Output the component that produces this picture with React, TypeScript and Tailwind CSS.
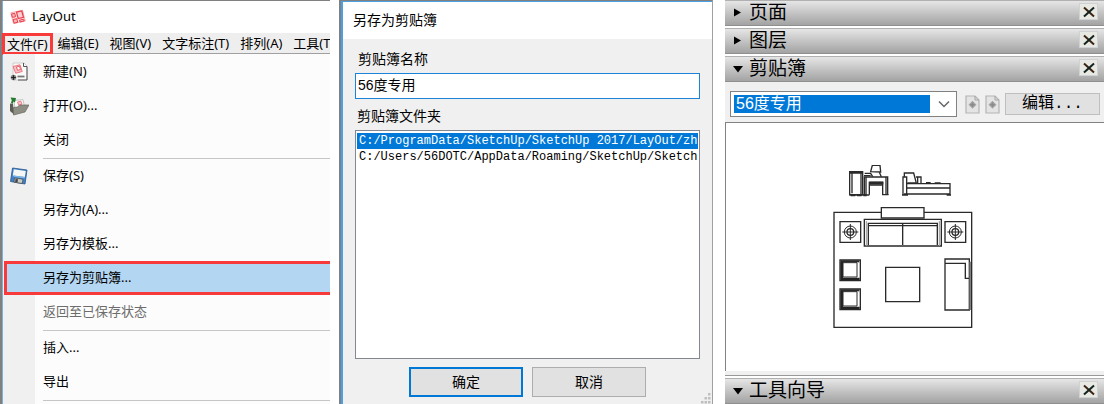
import { useState } from "react";
import type { ReactNode } from "react";
import clsx from "clsx";

const UI_FONT = "font-['Noto_Sans','Noto_Sans_CJK_SC',sans-serif]";
const DIALOG_FONT = "font-['Liberation_Sans','Noto_Sans_CJK_SC',sans-serif]";

function LayOutLogo() {
  return (
    <svg viewBox="0 0 16 16" className="size-4" aria-hidden="true">
      <path d="M.8 3.800 12.500 1.200 15.300 12 3.500 14.600Z" fill="#fde3e5" stroke="#f29aa0" strokeWidth=".8" />
      <path d="m6.500 3.200 5.300-1.200 1.700 6.300-5.300 1.200Z" fill="#fbd0d3" stroke="#e8404c" strokeWidth="1.200" />
      <path d="m1.500 5 3.200-.7.9 3.400-3.200.7Z" fill="#f8b9bd" stroke="#e8404c" strokeWidth="1" />
      <path d="m3.200 10.500 3.600-.8.9 3.600-3.600.8ZM9.500 11.200l4.200-1 .5 1.800-4.200 1Z" fill="#f8b9bd" stroke="#e8404c" strokeWidth="1" />
    </svg>
  );
}

function NewIcon() {
  return (
    <svg viewBox="0 0 20 20" className="size-5" aria-hidden="true">
      <path d="M4 1h11l3 3v14H4Z" fill="#fafafa" stroke="#c4c4c4" strokeWidth=".8" />
      <path d="M14.500 1v3.500H18V18H9" fill="none" stroke="#555" strokeWidth="1" />
      <path d="m4 4.500 7-1.700 2.200 6.700-6.500 1.700Z" fill="#f8c3c7" stroke="#ec6a73" strokeWidth=".9" />
      <path d="m7.500 5 3-.8 1 3.300-3 .8Z" fill="#fff" stroke="#e0444e" strokeWidth=".8" />
      <path d="M8.500 14.500h7" stroke="#777" strokeWidth="1.800" />
      <circle cx="4.500" cy="15.500" r="2.800" fill="#8b8b8b" />
      <path d="M4.500 13.200v4.600M2.200 15.500h4.600" stroke="#222" strokeWidth="1.200" />
    </svg>
  );
}

function OpenIcon() {
  return (
    <svg viewBox="0 0 20 20" className="size-5" aria-hidden="true">
      <path d="M1 7.500 4 8l1 10.500-4-3.500Z" fill="#5d5d56" />
      <path d="m5 4.500 9-.8 1.500 7L6 13Z" fill="#fff" stroke="#b5b5b5" strokeWidth=".8" />
      <path d="m8.500 6 3.500-.8 1 3-3.500.8Z" fill="#f9c4c7" stroke="#ec6a73" strokeWidth=".8" />
      <path d="m1.500 1.500 5.500.5-1 4.500-1.500-1L3.500 8 2 7l.8-2.800Z" fill="#257a2e" />
      <path d="m4.500 11.500 4-.5 2-2h9.500l-4 7-11.500 3Z" fill="#8e8e84" stroke="#66665e" strokeWidth=".7" />
    </svg>
  );
}

function SaveIcon() {
  return (
    <svg viewBox="0 0 20 20" className="size-5" aria-hidden="true">
      <path d="M3.500 2 18 4l-2 14-14.500-2.500Z" fill="#3d83cc" stroke="#24548a" strokeWidth=".8" />
      <path d="m4.800 3.200 12 1.700-1 6.200-12-1.700Z" fill="#f6f6f4" />
      <path d="m4.800 9.500 11 1.600-.2 1.400-11-1.600Z" fill="#7eb2e3" />
      <path d="m5.500 12 8.500 1.200-.7 4.300L5 16.200Z" fill="#c9ccc6" stroke="#444" strokeWidth=".7" />
      <path d="m6.500 13 2.500.3-.4 3-2.500-.4Z" fill="#444" />
    </svg>
  );
}

const MENUS = ["文件(F)", "编辑(E)", "视图(V)", "文字标注(T)", "排列(A)", "工具(T)"];

interface MenuEntry {
  label: string;
  icon?: ReactNode;
  disabled?: boolean;
  active?: boolean;
}

const MENU_GROUPS: MenuEntry[][] = [
  [
    { label: "新建(N)", icon: <NewIcon /> },
    { label: "打开(O)...", icon: <OpenIcon /> },
    { label: "关闭" },
  ],
  [
    { label: "保存(S)", icon: <SaveIcon /> },
    { label: "另存为(A)..." },
    { label: "另存为模板..." },
    { label: "另存为剪贴簿...", active: true },
    { label: "返回至已保存状态", disabled: true },
  ],
  [{ label: "插入..." }, { label: "导出" }],
];

function FileMenuWindow() {
  return (
    <section
      className={clsx(
        "mr-[9px] flex min-w-0 flex-col overflow-hidden border-t border-l-2 border-[#808080] bg-white text-[13px] text-black",
        UI_FONT,
      )}
    >
      <div className="flex flex-1 flex-col border-l border-[#7fb0dc]">
        <header className="flex h-8 items-center gap-1.5 pl-[7px]">
          <LayOutLogo />
          <h1>LayOut</h1>
        </header>
        <nav className="flex h-[21px] border-b border-[#a0a0a0] bg-[#eeeeee]">
          {MENUS.map((m, i) => (
            <button
              key={m}
              className={clsx(
                "flex shrink-0 items-center leading-4 whitespace-nowrap",
                i === 0 ? "-ml-px h-[22px] border-3 border-[#f93a3a] px-0.5" : "pl-[11px]",
                i === 1 && "-ml-[6px]",
              )}
            >
              {m}
            </button>
          ))}
        </nav>
        <div className="flex-1 bg-[linear-gradient(to_right,#f0f0f0_32px,#fcfcfc_32px)] pt-px">
          {MENU_GROUPS.map((group, g) => (
            <div key={g} role="group">
              {group.map((item) => (
                <button
                  key={item.label}
                  disabled={item.disabled}
                  className={clsx(
                    "flex h-[34px] items-center text-left whitespace-nowrap",
                    item.active
                      ? "ml-px w-[calc(100%-1px)] border-3 border-r-0 border-[#f93a3a] bg-[#b3d6f2] pl-9"
                      : "w-full pl-1.5",
                    item.disabled && "text-[#6d6d6d]",
                  )}
                >
                  {!item.active && <span className="mr-3.5 size-5">{item.icon}</span>}
                  {item.label}
                </button>
              ))}
              <hr className="mt-px ml-10 border-[#c6c6c6]" />
            </div>
          ))}
        </div>
      </div>
    </section>
  );
}

const FOLDERS = [
  "C:/ProgramData/SketchUp/SketchUp 2017/LayOut/zh",
  "C:/Users/56DOTC/AppData/Roaming/SketchUp/Sketch",
];

function SaveDialog() {
  const [name, setName] = useState("56度专用");
  const [selected, setSelected] = useState(0);
  return (
    <section
      className={clsx(
        "mr-3 flex min-w-0 flex-col border-t border-r border-l-2 border-t-[#808080] border-r-[#a0a0a0] border-l-[#808080] text-[14px] text-black",
        DIALOG_FONT,
      )}
    >
      <div className="flex flex-1 flex-col border-t border-l-2 border-[#4ba0e4] bg-[#f0f0f0]">
        <h2 className="flex h-[37px] items-center bg-white pl-2.5">另存为剪贴簿</h2>
        <div className="relative flex flex-1 flex-col px-3 pt-2.5 pb-[7px]">
          <label htmlFor="name" className="pl-[3px] leading-5">
            剪贴簿名称
          </label>
          <input
            id="name"
            value={name}
            onChange={(e) => setName(e.target.value)}
            className="mt-1 h-[26px] border border-[#1c84d8] bg-white px-0.5 pb-1 outline-none"
          />
          <span id="folders" className="mt-[7px] mb-1 pl-0.5 leading-5">
            剪贴簿文件夹
          </span>
          <ul
            role="listbox"
            aria-labelledby="folders"
            className="min-h-[229px] flex-1 overflow-hidden border border-[#828790] bg-white px-px pt-0.5 font-['Liberation_Mono',monospace] text-[12px]"
          >
            {FOLDERS.map((f, i) => (
              <li
                key={f}
                role="option"
                aria-selected={i === selected}
                onClick={() => setSelected(i)}
                className={clsx(
                  "overflow-hidden pl-0.5 leading-4 whitespace-nowrap",
                  i === selected && "bg-[#0078d7] text-white",
                )}
              >
                {f}
              </li>
            ))}
          </ul>
          <div className="mt-2 flex justify-center gap-[9px]">
            <button className="h-[30px] w-[114px] border-2 border-[#0078d7] bg-[#e1e1e1]">确定</button>
            <button className="h-[30px] w-[114px] border border-[#adadad] bg-[#e1e1e1]">取消</button>
          </div>
          <svg viewBox="0 0 12 12" className="absolute right-0 bottom-0 size-3" aria-hidden="true">
            <path
              d="M8 1h2.500v2.500H8ZM4.500 5H7v2.500H4.500ZM8 5h2.500v2.500H8ZM1 9h2.500v2.500H1ZM4.500 9H7v2.500H4.500ZM8 9h2.500v2.500H8Z"
              fill="#bfbfbf"
            />
          </svg>
        </div>
      </div>
    </section>
  );
}

function TrayHeader({ title, open = false }: { title: string; open?: boolean }) {
  return (
    <header className="flex h-[26px] shrink-0 items-start justify-between border-y border-t-[#b0b0b0] border-b-[#8f8f8f] bg-linear-to-b from-[#e6e6e6] to-[#a3a3a3] pr-1.5 pl-2">
      <button aria-expanded={open} className="flex h-6 items-center gap-1.5 text-[19px]">
        <svg viewBox="0 0 10 10" className="size-2.5" aria-hidden="true">
          <path d={open ? "M0 2h10L5 8.500Z" : "M1 .5v8l7-4Z"} fill="#000" />
        </svg>
        <h2 className="leading-6">{title}</h2>
      </button>
      <button
        aria-label={`关闭 ${title}`}
        className="mt-0.5 flex h-[17px] w-[19px] items-center justify-center border border-[#cfd2d4] bg-[#e9e9e4]"
      >
        <svg viewBox="0 0 12 12" className="size-3" fill="none" aria-hidden="true">
          <path d="m1 1.500 10 9" stroke="#3a2412" strokeWidth="2" />
          <path d="m11 1.500-10 9" stroke="#10231f" strokeWidth="2" />
        </svg>
      </button>
    </header>
  );
}

function PageButton({ label }: { label: string }) {
  return (
    <button aria-label={label}>
      <svg viewBox="0 0 15 19" className="h-[19px] w-[15px]" aria-hidden="true">
        <path d="M1 1h9l4 4v13H1Z" fill="#e4e4e4" stroke="#b4b4b4" strokeWidth="1.200" />
        <path d="M10 1v4h4" fill="none" stroke="#a5a5a5" />
        <path d="m7.500 5.700 4 4-4 4-4-4Z" fill="#a6a6a6" />
        <path d="M7.500 7.500v4.400M5.300 9.700h4.400" stroke="#8a8a8a" strokeWidth="1.500" />
      </svg>
    </button>
  );
}

function FurniturePlan() {
  return (
    <svg
      viewBox="36 30 426 492"
      className="h-[164px] w-[142px]"
      fill="none"
      stroke="#2a2a2a"
      strokeWidth="4"
      role="img"
      aria-label="家具"
    >
      <path d="M42 172H455V517H42Z" />
      <path d="M184 158H312V189H184Z" fill="#fff" />
      <path d="M133 273V193H364V273ZM145 270V205H352V270M145 212H352M248 205V270" />
      <path d="M139 198V273M358 198V273" stroke="#999" strokeWidth="3" />
      {[91, 406].map((x) => (
        <g key={x} transform={`translate(${x} 231)`}>
          <path d="M-31-31H31V31H-31Z" />
          <circle r="18" strokeWidth="3" />
          <circle r="10" />
          <path d="M-24 0H24M0-24V24" strokeWidth="3" />
        </g>
      ))}
      {[315, 402].map((y) => (
        <g key={y} transform={`translate(60 ${y})`}>
          <path d="M0 0H61V62H0Z" />
          <path d="M5 4V57H59" strokeWidth="8" stroke="#222" />
          <path d="M9 8H51V51H9Z" strokeWidth="3" />
          <path d="M3 4H58" strokeWidth="6" />
        </g>
      ))}
      <path d="M197 337H299V440H197Z" />
      <path d="M375 465V312H448V465ZM375 325H436V370H450M448 314V370" />
      <path d="M450 320V465" stroke="#666" strokeWidth="5" />
      <path d="M89 50H128V119H89ZM96 55V115M123 52V118M89 54H128M88 120H148" />
      <path d="M92 121H140" strokeWidth="6" strokeDasharray="14 5" />
      <path d="M133 119V66H203V119M148 119V82H188V119M198 68V119M138 68V119M146 90H190M186 119H206" />
      <path d="M148 84H190" strokeWidth="9" />
      <path d="M152 50 157 31H180L182 51ZM134 55H152L158 65M132 62H152M178 52 184 65" />
      <path d="M249 118V66H260V118M246 120H264M260 86H390V117H252M260 99H390M380 120H393" />
      <path d="M253 66V54H281L289 84H262M288 66H303V85M293 68V84M318 83H332M344 84H362" />
    </svg>
  );
}

function TrayPanel() {
  return (
    <section className={clsx("flex min-w-0 flex-col gap-0.5 text-black", DIALOG_FONT)}>
      <TrayHeader title="页面" />
      <TrayHeader title="图层" />
      <div className="flex flex-1 flex-col border-b border-[#999]">
        <TrayHeader title="剪贴簿" open />
        <div className="flex h-10 items-center bg-[#f0f0f0] pt-1 pr-1 pl-[5px]">
          <div className="flex h-[26px] min-w-0 flex-1 items-center border border-[#828282] bg-white pr-1.5 pl-[3px]">
            <select
              aria-label="剪贴簿"
              className="h-[18px] min-w-0 flex-1 appearance-none bg-[#0078d7] pl-0.5 text-[16px] leading-[18px] text-white outline-none"
            >
              <option>56度专用</option>
            </select>
            <svg viewBox="0 0 12 12" className="ml-2 size-3" fill="none" aria-hidden="true">
              <path d="m1 3.500 5 5 5-5" stroke="#666" strokeWidth="1.500" />
            </svg>
          </div>
          <div className="mr-[5px] ml-2 flex gap-[5px]">
            <PageButton label="上一页" />
            <PageButton label="下一页" />
          </div>
          <button className="h-[22px] w-[95px] border border-[#bfbfbf] bg-[#e1e1e1] font-['Liberation_Mono','Noto_Sans_CJK_SC',monospace] text-[16px] leading-5">
            编辑...
          </button>
        </div>
        <div className="flex flex-1 items-center justify-center border-t border-l border-[#828282] bg-white pr-6">
          <FurniturePlan />
        </div>
        <div className="h-1 bg-[#f0f0f0]" />
      </div>
      <TrayHeader title="工具向导" open />
    </section>
  );
}

export default function App() {
  return (
    <main className="grid min-h-screen grid-cols-[339fr_386fr_379fr] bg-white">
      <FileMenuWindow />
      <SaveDialog />
      <TrayPanel />
    </main>
  );
}
